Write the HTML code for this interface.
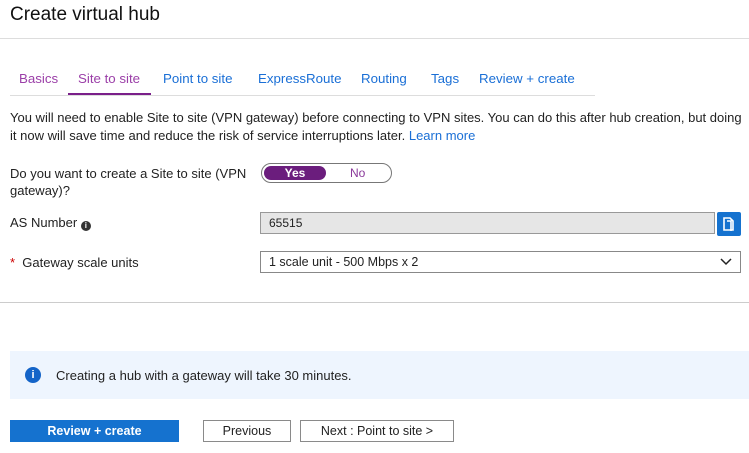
<!DOCTYPE html>
<html><head><meta charset="utf-8"><style>
body{margin:0;width:749px;height:453px;background:#fff;font-family:"Liberation Sans",sans-serif;color:#222;position:relative;overflow:hidden}
.a{position:absolute;white-space:nowrap}
.t{font-size:13.3px;top:71px}
.p{font-size:13px;color:#222}
.btn{position:absolute;top:420px;height:22px;box-sizing:border-box;border:1px solid #8a8a8a;font-size:12.5px;text-align:center;line-height:20px;background:#fff}
</style></head><body>
<div class="a" style="left:10px;top:4px;font-size:19px;color:#111">Create virtual hub</div>
<div class="a" style="left:0;top:38px;width:749px;height:1px;background:#ddd"></div>
<div class="a t" style="left:19px;color:#9b3fa8">Basics</div>
<div class="a t" style="left:78px;color:#9b3fa8">Site to site</div>
<div class="a t" style="left:163px;color:#1a6fd6">Point to site</div>
<div class="a t" style="left:258px;color:#1a6fd6">ExpressRoute</div>
<div class="a t" style="left:361px;color:#1a6fd6">Routing</div>
<div class="a t" style="left:431px;color:#1a6fd6">Tags</div>
<div class="a t" style="left:479px;color:#1a6fd6">Review + create</div>
<div class="a" style="left:10px;top:95px;width:585px;height:1px;background:#ddd"></div>
<div class="a" style="left:68px;top:93px;width:83px;height:2px;background:#7a1f8a"></div>
<div class="a p" style="left:10px;top:109px;line-height:18px">You will need to enable Site to site (VPN gateway) before connecting to VPN sites. You can do this after hub creation, but doing<br>it now will save time and reduce the risk of service interruptions later. <span style="color:#1a6fd6">Learn more</span></div>
<div class="a p" style="left:10px;top:165px;line-height:17px">Do you want to create a Site to site (VPN<br>gateway)?</div>
<div class="a" style="left:261px;top:163px;width:131px;height:20px;box-sizing:border-box;border:1px solid #777;border-radius:10px"></div>
<div class="a" style="left:264px;top:166px;width:62px;height:14px;background:#6b1d7d;border-radius:7px;color:#fff;font-size:12px;font-weight:bold;text-align:center;line-height:14px">Yes</div>
<div class="a" style="left:350px;top:166px;font-size:12px;color:#8a3a9a">No</div>
<div class="a p" style="left:10px;top:215px">AS Number <span style="display:inline-block;width:10px;height:10px;border-radius:50%;background:#333;color:#fff;font-size:8px;text-align:center;line-height:10px;font-weight:bold;vertical-align:-1px">i</span></div>
<div class="a" style="left:260px;top:212px;width:455px;height:22px;box-sizing:border-box;border:1px solid #999;background:#e6e6e6;font-size:12px;padding-left:8px;line-height:20px">65515</div>
<div class="a" style="left:717px;top:212px;width:24px;height:24px;background:#1572cf;border-radius:2px">
<svg width="24" height="24" viewBox="0 0 24 24"><path d="M7 6h6l3 3v9H7z" fill="none" stroke="#fff" stroke-width="1.6"/><path d="M10 9h4v10" fill="none" stroke="#fff" stroke-width="1.6"/></svg></div>
<div class="a p" style="left:10px;top:255px"><span style="color:#c00">*</span>&nbsp; Gateway scale units</div>
<div class="a" style="left:260px;top:251px;width:481px;height:22px;box-sizing:border-box;border:1px solid #888;font-size:12.5px;padding-left:8px;line-height:20px">1 scale unit - 500 Mbps x 2</div>
<svg class="a" style="left:720px;top:257px" width="12" height="10"><path d="M1 2l5 5 5-5" fill="none" stroke="#222" stroke-width="1.5"/></svg>
<div class="a" style="left:0;top:302px;width:749px;height:1px;background:#ccc"></div>
<div class="a" style="left:10px;top:351px;width:739px;height:48px;background:#eef5fe"></div>
<div class="a" style="left:25px;top:367px;width:16px;height:16px;border-radius:50%;background:#1464c8;color:#fff;font-size:11px;font-weight:bold;text-align:center;line-height:16px">i</div>
<div class="a p" style="left:56px;top:368px">Creating a hub with a gateway will take 30 minutes.</div>
<div class="btn" style="left:10px;width:169px;background:#1572cf;border-color:#1572cf;color:#fff;font-weight:bold">Review + create</div>
<div class="btn" style="left:203px;width:88px">Previous</div>
<div class="btn" style="left:300px;width:154px">Next : Point to site &gt;</div>
</body></html>
